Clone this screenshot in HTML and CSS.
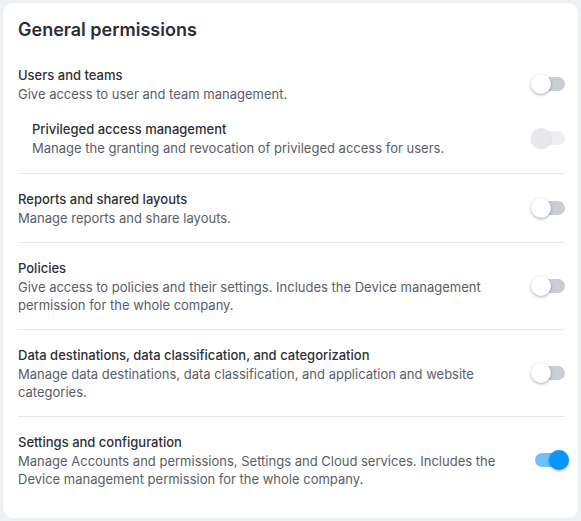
FILE: index.html
```html
<!DOCTYPE html>
<html lang="en">
<head>
    <meta charset="UTF-8">
    <meta name="viewport" content="width=device-width, initial-scale=1.0">
    <title>General permissions</title>
    <link rel="stylesheet" href="styles.css">
</head>
<body>
    <div class="tarjeta">
        <h2 class="titulo">General permissions</h2>

        <div class="seccion">
            <div class="fila">
                <div class="texto">
                    <div class="nombre">Users and teams</div>
                    <div class="descripcion">Give access to user and team management.</div>
                </div>
                <div class="interruptor"><span class="bolita"></span></div>
            </div>
            <div class="fila sub">
                <div class="texto">
                    <div class="nombre">Privileged access management</div>
                    <div class="descripcion">Manage the granting and revocation of privileged access for users.</div>
                </div>
                <div class="interruptor desactivado"><span class="bolita"></span></div>
            </div>
        </div>

        <div class="seccion">
            <div class="fila">
                <div class="texto">
                    <div class="nombre">Reports and shared layouts</div>
                    <div class="descripcion">Manage reports and share layouts.</div>
                </div>
                <div class="interruptor"><span class="bolita"></span></div>
            </div>
        </div>

        <div class="seccion">
            <div class="fila">
                <div class="texto">
                    <div class="nombre">Policies</div>
                    <div class="descripcion">Give access to policies and their settings. Includes the Device management permission for the whole company.</div>
                </div>
                <div class="interruptor"><span class="bolita"></span></div>
            </div>
        </div>

        <div class="seccion">
            <div class="fila">
                <div class="texto">
                    <div class="nombre">Data destinations, data classification, and categorization</div>
                    <div class="descripcion">Manage data destinations, data classification, and application and website categories.</div>
                </div>
                <div class="interruptor"><span class="bolita"></span></div>
            </div>
        </div>

        <div class="seccion">
            <div class="fila">
                <div class="texto">
                    <div class="nombre">Settings and configuration</div>
                    <div class="descripcion">Manage Accounts and permissions, Settings and Cloud services. Includes the Device management permission for the whole company.</div>
                </div>
                <div class="interruptor activo"><span class="bolita"></span></div>
            </div>
        </div>
    </div>
</body>
</html>
```

FILE: styles.css
```css
body {
    background-color: #eef1f4;
    margin: 0;
    padding: 0;
    font-family: Inter, "Noto Sans", sans-serif;
}

.tarjeta {
    background: white;
    margin: 3px;
    border-radius: 10px;
    padding: 15px 13px 29px 15px;
    min-height: 471px;
}

.titulo {
    margin: 0 0 23px;
    font-size: 18px;
    line-height: 24px;
    font-weight: 600;
    color: #2b2e33;
}

.seccion {
    border-bottom: 1px solid #e6e8eb;
    padding: 15px 0;
}

.seccion:first-of-type {
    padding-top: 0;
    padding-bottom: 16px;
}

.seccion:last-child {
    border-bottom: none;
    padding-bottom: 0;
}

.fila {
    display: flex;
    align-items: center;
}

.fila.sub {
    padding-left: 14px;
    margin-top: 16px;
}

.texto {
    flex: 1;
    padding-right: 34px;
}

.nombre {
    font-size: 13px;
    line-height: 20px;
    font-weight: 500;
    color: #2e3136;
}

.descripcion {
    font-size: 13px;
    line-height: 18px;
    color: #595e66;
}

.interruptor {
    position: relative;
    width: 30px;
    height: 14px;
    border-radius: 7px;
    background: #c9ced5;
    flex-shrink: 0;
}

.bolita {
    position: absolute;
    top: -3px;
    left: -4px;
    width: 20px;
    height: 20px;
    border-radius: 50%;
    background: white;
    box-shadow: 0 1px 3px rgba(0, 0, 0, 0.35);
}

.interruptor.desactivado {
    background: #eceef1;
}

.interruptor.desactivado .bolita {
    background: #e6e8eb;
    box-shadow: 0 1px 2px rgba(0, 0, 0, 0.15);
}

.interruptor.activo {
    background: #6cc1ff;
}

.interruptor.activo .bolita {
    left: auto;
    right: -4px;
    background: #0795ff;
}
```
